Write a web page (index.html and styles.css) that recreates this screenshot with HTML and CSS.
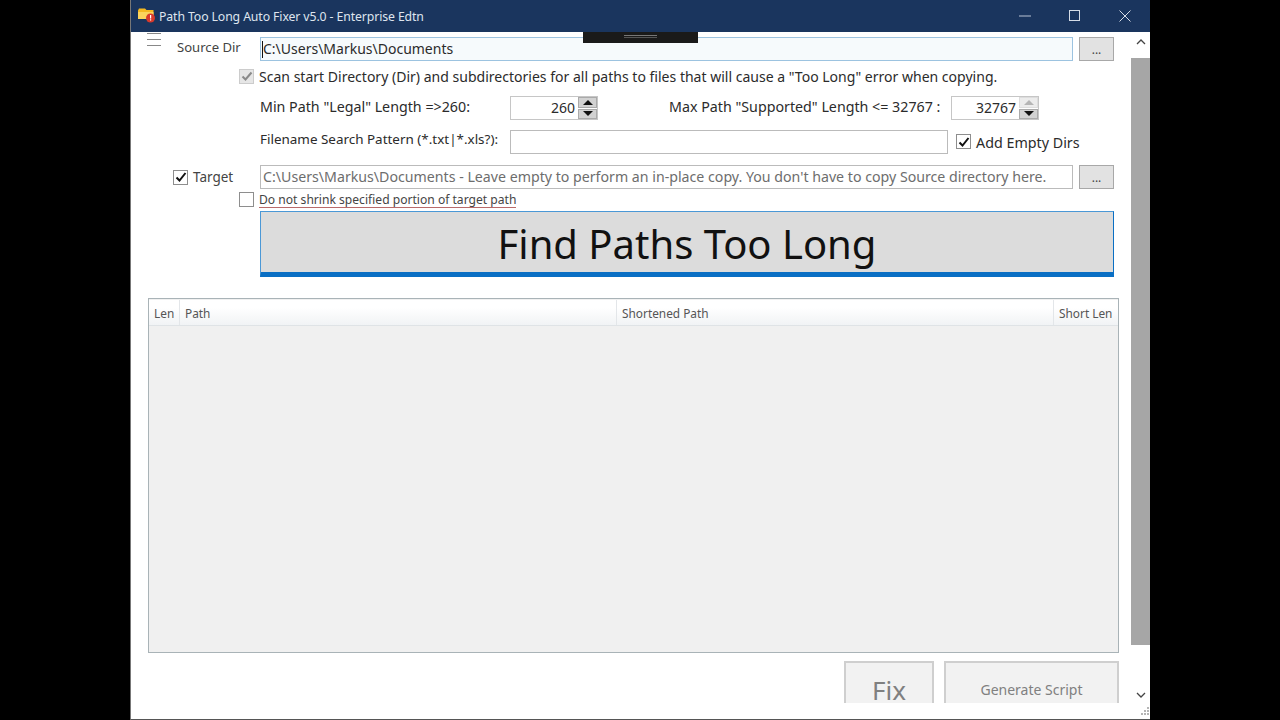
FILE: index.html
```html
<!DOCTYPE html>
<html lang="en">
<head>
<meta charset="utf-8">
<title>Path Too Long Auto Fixer</title>
<link rel="stylesheet" href="styles.css">
</head>
<body>
<div class="window">
  <header class="titlebar">
    <svg class="appicon" width="18" height="16" viewBox="0 0 18 16"><path d="M0 3.500 1 1.500H7L8.500 3H15.500V12H0Z" fill="#f5b921"/><path d="M0 5H15.500V12H0Z" fill="#fbd35c"/><circle cx="12.500" cy="11" r="4.500" fill="#d8392b"/><rect x="12" y="8" width="1.200" height="3.500" fill="#fff"/><rect x="12" y="12.300" width="1.200" height="1.200" fill="#fff"/></svg>
    <span class="title">Path Too Long Auto Fixer v5.0 - Enterprise Edtn</span>
    <div class="winbtns">
      <svg width="12" height="12" viewBox="0 0 12 12"><path d="M0 6H12" stroke="#b9c4d4" stroke-width="1"/></svg>
      <svg width="12" height="12" viewBox="0 0 12 12"><rect x=".5" y=".5" width="10" height="10" fill="none" stroke="#d5dce6" stroke-width="1"/></svg>
      <svg width="12" height="12" viewBox="0 0 12 12"><path d="M.5.500 11.500 11.500M11.500.500 .5 11.500" stroke="#d5dce6" stroke-width="1" fill="none"/></svg>
    </div>
  </header>
  <div class="client">
    <div class="tab"><span class="tabgrip"></span></div>
    <main class="main">
      <div class="row row-source">
        <div class="hamburger"><span></span><span></span><span></span></div>
        <label class="lbl-source">Source Dir</label>
        <div class="input input-source"><span class="caret"></span>C:\Users\Markus\Documents</div>
        <button class="browse">...</button>
      </div>
      <div class="row row-scan">
        <span class="check check-dis"><svg width="12" height="12" viewBox="0 0 12 12"><path d="M1.500 6.500 4.500 9.500 10.500 2.500" fill="none" stroke="#8a8a8a" stroke-width="2"/></svg></span>
        <span class="txt">Scan start Directory (Dir) and subdirectories for all paths to files that will cause a "Too Long" error when copying.</span>
      </div>
      <div class="row row-len">
        <span class="txt lbl-min">Min Path "Legal" Length =&gt;260:</span>
        <div class="spin spin-min">
          <span class="spinval">260</span>
          <div class="spinbtns"><span class="sb"><i class="up"></i></span><span class="sb"><i class="down"></i></span></div>
        </div>
        <span class="txt lbl-max">Max Path "Supported" Length &lt;= 32767 :</span>
        <div class="spin spin-max">
          <span class="spinval">32767</span>
          <div class="spinbtns"><span class="sb sb-dis"><i class="up up-dis"></i></span><span class="sb"><i class="down"></i></span></div>
        </div>
      </div>
      <div class="row row-filter">
        <span class="txt lbl-filter">Filename Search Pattern (*.txt|*.xls?):</span>
        <div class="input input-filter"></div>
        <span class="check check-on"><svg width="12" height="12" viewBox="0 0 12 12"><path d="M1.500 6.500 4.500 9.500 10.500 2" fill="none" stroke="#111" stroke-width="2"/></svg></span>
        <span class="txt lbl-empty">Add Empty Dirs</span>
      </div>
      <div class="row row-target">
        <span class="check check-on"><svg width="12" height="12" viewBox="0 0 12 12"><path d="M1.500 6.500 4.500 9.500 10.500 2" fill="none" stroke="#111" stroke-width="2"/></svg></span>
        <span class="txt lbl-target">Target</span>
        <div class="input input-target">C:\Users\Markus\Documents - Leave empty to perform an in-place copy. You don't have to copy Source directory here.</div>
        <button class="browse">...</button>
      </div>
      <div class="row row-shrink">
        <span class="check"></span>
        <span class="txt-shrink">Do not shrink specified portion of target path</span>
      </div>
      <button class="find">Find Paths Too Long</button>
      <section class="grid">
        <div class="ghead">
          <span class="gh gh-len">Len</span>
          <span class="gh gh-path">Path</span>
          <span class="gh gh-short">Shortened Path</span>
          <span class="gh gh-slen">Short Len</span>
        </div>
      </section>
      <div class="actions">
        <button class="act act-fix">Fix</button>
        <button class="act act-gen">Generate Script</button>
      </div>
    </main>
    <aside class="scrollbar">
      <span class="arrow arrow-up"><svg width="10" height="6" viewBox="0 0 10 6"><path d="M1 5 5 1 9 5" fill="none" stroke="#444" stroke-width="1.300"/></svg></span>
      <div class="track"><div class="thumb"></div></div>
      <span class="arrow arrow-down"><svg width="10" height="6" viewBox="0 0 10 6"><path d="M1 1 5 5 9 1" fill="none" stroke="#444" stroke-width="1.300"/></svg></span>
    </aside>
  </div>
  <footer class="statusbar"><svg width="12" height="12" viewBox="0 0 12 12" fill="#b5b5b5"><rect x="9" y="1" width="2" height="2"/><rect x="6" y="4" width="2" height="2"/><rect x="9" y="4" width="2" height="2"/><rect x="3" y="7" width="2" height="2"/><rect x="6" y="7" width="2" height="2"/><rect x="9" y="7" width="2" height="2"/></svg></footer>
</div>
</body>
</html>
```
FILE: styles.css
```css
* { box-sizing: border-box; }
html, body { margin: 0; height: 100%; }
body { background: #000; overflow: hidden; font-family: "Noto Sans", "Open Sans", sans-serif; color: #2b2b2b; }
.window { width: 1020px; height: 720px; margin-left: 130px; background: #fff; border-left: 1px solid #777; border-bottom: 1px solid #555; display: flex; flex-direction: column; }
.titlebar { height: 32px; flex: none; background: #1a355e; display: flex; align-items: center; padding-left: 7px; color: #dfe5ee; font-size: 12.250px; }
.appicon { margin-top: -3px; }
.title { margin-left: 3px; letter-spacing: -.1px; }
.winbtns { margin-left: auto; display: flex; gap: 38px; padding-right: 19px; }
.client { flex: 1; min-height: 0; display: flex; position: relative; }
.tab { position: absolute; left: 452px; top: 0; width: 115px; height: 11px; background: #1a1a1a; display: flex; justify-content: center; padding-top: 3px; }
.tabgrip { width: 33px; height: 3px; border-top: 1px solid #777; border-bottom: 1px solid #555; }
.main { width: 1000px; flex: none; height: 671px; overflow: hidden; display: flex; flex-direction: column; }
.row { display: flex; align-items: center; font-size: 14px; }
.txt { white-space: nowrap; }
.row-source { height: 24px; margin-top: 5px; padding-left: 16px; }
.hamburger { width: 14px; height: 13px; margin-top: -20px; display: flex; flex-direction: column; justify-content: space-between; }
.hamburger span { height: 1px; background: #888; display: block; }
.lbl-source { margin-left: 16px; width: 83px; padding-bottom: 4px; font-size: 13.100px; color: #444; }
.input { height: 24px; border: 1px solid #bbb; display: flex; align-items: center; padding: 0 0 2px 1px; background: #fff; white-space: nowrap; }
.input-source { width: 813px; border-color: #9cc3e0; background: #f6fafc; font-size: 14px; }
.caret { width: 1px; height: 17px; background: #111; margin: 2px 0 0; }
.browse { width: 35px; height: 24px; margin-left: 6px; background: #e2e2e2; border: 1px solid #a8a8a8; font: 12px "Noto Sans", sans-serif; color: #444; padding: 0; }
.row-scan { height: 16px; margin-top: 7px; padding-left: 108px; }
.check { width: 15px; height: 15px; border: 1px solid #8e8e8e; display: flex; align-items: center; justify-content: center; flex: none; background: #fff; }
.check-dis { border-color: #ccc; background: #e6e6e6; }
.row-scan .txt { margin-left: 5px; font-size: 14.040px; }
.row-len { height: 24px; margin-top: 12px; padding-left: 129px; }
.lbl-min { width: 250px; font-size: 14.250px; padding-bottom: 4px; }
.spin { height: 24px; border: 1px solid #c6c6c6; display: flex; align-items: center; justify-content: flex-end; }
.spin-min { width: 88px; }
.spin-max { width: 88px; }
.spinval { margin-right: 3px; font-size: 14px; padding-bottom: 1px; }
.spinbtns { width: 19px; height: 22px; display: flex; flex-direction: column; gap: 1px; }
.sb { flex: 1; background: #d2d2d2; border: 1px solid #aaa; display: flex; align-items: center; justify-content: center; }
.sb-dis { background: #ececec; border-color: #ddd; }
.up, .down { width: 0; height: 0; border-left: 5px solid transparent; border-right: 5px solid transparent; }
.up { border-bottom: 5px solid #111; }
.down { border-top: 5px solid #111; }
.up-dis { border-bottom-color: #b5b5b5; }
.lbl-max { margin-left: 71px; width: 282px; font-size: 14.250px; padding-bottom: 3px; }
.row-filter { height: 24px; margin-top: 10px; padding-left: 129px; }
.lbl-filter { width: 250px; font-size: 13.450px; padding-bottom: 6px; }
.input-filter { width: 438px; }
.row-filter .check { margin-left: 8px; margin-top: -1px; }
.lbl-empty { margin-left: 5px; font-size: 14.300px; }
.row-target { height: 24px; margin-top: 11px; padding-left: 42px; }
.lbl-target { margin-left: 5px; width: 67px; font-size: 13.500px; padding-bottom: 1px; color: #444; }
.input-target { width: 813px; padding-left: 2px; color: #6d6d6d; font-size: 14.180px; }
.row-shrink { height: 15px; margin-top: 3px; padding-left: 108px; }
.txt-shrink { margin-left: 5px; font-size: 12.100px; color: #444; border-bottom: 1px solid #b96a6a; line-height: 14px; margin-top: 2px; white-space: nowrap; }
.find { width: 854px; height: 66px; margin: 4px 0 0 129px; flex: none; background: #dcdcdc; border: 1px solid #4b98d6; border-right-color: #0a6fc4; border-bottom: 5px solid #0a6fc4; font: 40px/1 "Noto Sans", sans-serif; color: #111; padding: 4px 0 0; }
.grid { width: 971px; height: 355px; margin: 21px 0 0 17px; flex: none; border: 1px solid #a9b3b7; background: #f0f0f0; }
.ghead { height: 26px; margin-top: 1px; background: linear-gradient(#fff 30%, #f1f3f5); border-bottom: 1px solid #dfe3e6; display: flex; }
.gh { font-size: 11.850px; color: #555; padding: 0 0 0 5px; display: flex; align-items: center; border-right: 1px solid #e3e6e9; white-space: nowrap; }
.gh-len { width: 31px; }
.gh-path { width: 437px; }
.gh-short { width: 437px; }
.gh-slen { flex: 1; border-right: 0; }
.actions { display: flex; justify-content: flex-end; gap: 10px; margin: 8px 12px 0 0; flex: none; height: 42px; overflow: hidden; }
.act { height: 60px; background: #f2f2f2; border: 2px solid #cfcfcf; color: #808080; padding: 0; font-family: "Noto Sans", sans-serif; }
.act-fix { width: 90px; font-size: 26px; padding-bottom: 2px; }
.act-gen { width: 175px; font-size: 14px; padding-bottom: 4px; }
.scrollbar { width: 19px; height: 671px; display: flex; flex-direction: column; background: #fff; }
.arrow { flex: none; display: flex; align-items: center; justify-content: center; }
.arrow-up { height: 26px; padding-bottom: 6px; }
.arrow-down { height: 18px; padding-top: 2px; }
.track { flex: 1; }
.thumb { height: 587px; background: #a6a6a6; }
.statusbar { flex: 1; display: flex; justify-content: flex-end; align-items: flex-end; padding: 0 0 1px; }
```
